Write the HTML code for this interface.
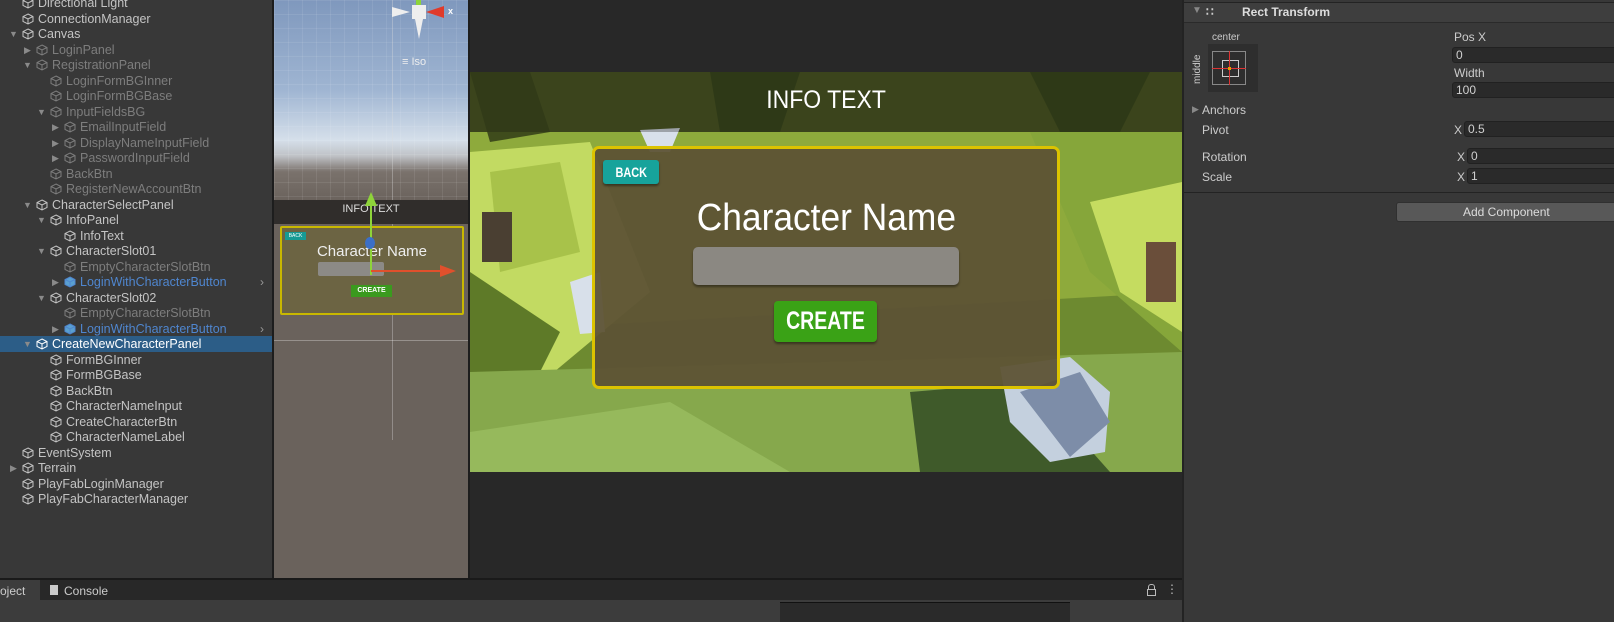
<!DOCTYPE html>
<html><head><meta charset="utf-8"><style>
*{margin:0;padding:0;box-sizing:border-box}
body{width:1614px;height:622px;background:#282828;font-family:"Liberation Sans",sans-serif;overflow:hidden;position:relative;font-size:12px;color:#c4c4c4}
.abs{position:absolute}
#hier{left:0;top:0;width:272px;height:578px;background:#383838}
.row{position:absolute;left:0;width:272px;height:16px;line-height:16px;white-space:nowrap}
.row .ic{position:absolute;top:2px;width:12px;height:12px}
.row .t{position:absolute}
.row .ar{position:absolute;top:0;font-size:9px;color:#8a8a8a}
.sel{background:#2c5d87;color:#fff}
#scene{left:274px;top:0;width:194px;height:578px;background:#6a625c;overflow:hidden}
#game{left:470px;top:72px;width:712px;height:400px;overflow:hidden;background:#7d9c3e}
#insp{left:1182px;top:0;width:432px;height:622px;background:#383838;border-left:2px solid #232323}
.fld{position:absolute;background:#2a2a2a;border:1px solid #212121;border-radius:3px;height:16px;line-height:14px;padding-left:3px;color:#d0d0d0}
.cond{display:inline-block;transform:scaleX(.78)}
</style></head><body>

<div id="hier" class="abs"></div>

<script>
const rows=[
["Directional Light",0,"",""],["ConnectionManager",0,"",""],["Canvas",0,"d",""],
["LoginPanel",1,"r","g"],["RegistrationPanel",1,"d","g"],["LoginFormBGInner",2,"","g"],["LoginFormBGBase",2,"","g"],["InputFieldsBG",2,"d","g"],
["EmailInputField",3,"r","g"],["DisplayNameInputField",3,"r","g"],["PasswordInputField",3,"r","g"],["BackBtn",2,"","g"],["RegisterNewAccountBtn",2,"","g"],
["CharacterSelectPanel",1,"d",""],["InfoPanel",2,"d",""],["InfoText",3,"",""],["CharacterSlot01",2,"d",""],["EmptyCharacterSlotBtn",3,"","g"],
["LoginWithCharacterButton",3,"r","b"],["CharacterSlot02",2,"d",""],["EmptyCharacterSlotBtn",3,"","g"],["LoginWithCharacterButton",3,"r","b"],
["CreateNewCharacterPanel",1,"d","sel"],["FormBGInner",2,"",""],["FormBGBase",2,"",""],["BackBtn",2,"",""],["CharacterNameInput",2,"",""],["CreateCharacterBtn",2,"",""],["CharacterNameLabel",2,"",""],
["EventSystem",0,"",""],["Terrain",0,"r",""],["PlayFabLoginManager",0,"",""],["PlayFabCharacterManager",0,"",""]];
let h="";
rows.forEach((r,i)=>{
 const top=Math.round(-5+i*15.5);
 const tx=38+r[1]*14, ix=tx-16, ax=ix-13;
 const cls=r[3]=="sel"?"row sel":"row";
 const col=r[3]=="g"?"#7d7d7d":r[3]=="b"?"#4f86cf":(r[3]=="sel"?"#fff":"#c4c4c4");
 const fill=r[3]=="b"?"#5aa0d0":"none";
 let a="";
 if(r[2]=="d")a=`<span class="ar" style="left:${ax}px">&#9660;</span>`;
 if(r[2]=="r")a=`<span class="ar" style="left:${ax+1}px">&#9654;</span>`;
 let extra=r[3]=="b"?`<span class="t" style="left:260px;color:#999">&#8250;</span>`:"";
 h+=`<div class="${cls}" style="top:${top}px">${a}<svg class="ic" style="left:${ix}px" viewBox="0 0 12 12"><path d="M6 1L11 3.5V8.5L6 11L1 8.5V3.5Z" fill="${fill}" stroke="${col}"/><path d="M1 3.5L6 6L11 3.5 M6 6V11" fill="none" stroke="${col}"/></svg><span class="t" style="left:${tx}px;color:${col};font-size:12.5px">${r[0]}</span>${extra}</div>`;
});
document.getElementById("hier").innerHTML=h;
</script>

<div class="abs" style="left:272px;top:0;width:2px;height:578px;background:#1d1d1d"></div>

<div id="scene" class="abs">
 <div class="abs" style="left:0;top:0;width:194px;height:200px;background:linear-gradient(#7f98bd 0%,#9fb5d2 45%,#d5dfea 70%,#bfc2c6 78%,#7a726c 86%,#6b635d 100%)"></div>
 <div class="abs" style="left:0;top:0;width:194px;height:200px;background-image:linear-gradient(rgba(255,255,255,.08) 1px,transparent 1px),linear-gradient(90deg,rgba(255,255,255,.08) 1px,transparent 1px);background-size:14px 14px"></div>
 <div class="abs" style="left:118px;top:0;width:1px;height:440px;background:rgba(220,220,220,.35)"></div>
 <div class="abs" style="left:0;top:200px;width:194px;height:24px;background:#302d2b"></div>
 <div class="abs" style="left:0;top:203px;width:194px;text-align:center;color:#ddd;font-size:11px">INFO TEXT</div>
 <div class="abs" style="left:6px;top:226px;width:184px;height:89px;border:2px solid #c9b800;background:#6c6443;border-radius:2px"></div>
 <div class="abs" style="left:11px;top:232px;width:21px;height:8px;background:#169a94;font-size:5px;color:#fff;text-align:center;line-height:8px">BACK</div>
 <div class="abs" style="left:6px;top:243px;width:184px;text-align:center;color:#eee;font-size:15px">Character Name</div>
 <div class="abs" style="left:44px;top:262px;width:66px;height:14px;background:#8c8a86;border-radius:2px"></div>
 <div class="abs" style="left:77px;top:285px;width:41px;height:12px;background:#3a9a1e;color:#fff;font-size:7px;font-weight:bold;text-align:center;line-height:12px">CREATE</div>
 <div class="abs" style="left:96px;top:200px;width:2px;height:75px;background:#8ed43a"></div>
 <div class="abs" style="left:91px;top:192px;width:0;height:0;border-left:6px solid transparent;border-right:6px solid transparent;border-bottom:14px solid #8ed43a"></div>
 <div class="abs" style="left:97px;top:270px;width:70px;height:2px;background:#e0502c"></div>
 <div class="abs" style="left:166px;top:265px;width:0;height:0;border-top:6px solid transparent;border-bottom:6px solid transparent;border-left:16px solid #e0502c"></div>
 <div class="abs" style="left:91px;top:237px;width:10px;height:12px;background:#3b6fc8;border-radius:50%"></div>
 <div class="abs" style="left:138px;top:5px;width:14px;height:14px;background:#eee"></div>
 <div class="abs" style="left:118px;top:7px;width:0;height:0;border-top:5px solid transparent;border-bottom:5px solid transparent;border-left:18px solid #eee"></div>
 <div class="abs" style="left:152px;top:6px;width:0;height:0;border-top:6px solid transparent;border-bottom:6px solid transparent;border-right:18px solid #e03a2a"></div>
 <div class="abs" style="left:141px;top:19px;width:0;height:0;border-left:4px solid transparent;border-right:4px solid transparent;border-top:20px solid #eee"></div>
 <div class="abs" style="left:142px;top:0;width:5px;height:5px;background:#8ed43a"></div>
 <div class="abs" style="left:174px;top:6px;color:#fff;font-size:9px;font-weight:bold">x</div>
 <div class="abs" style="left:128px;top:56px;color:#eee;font-size:11px">&#8801; Iso</div>
 <div class="abs" style="left:0;top:340px;width:194px;height:1px;background:rgba(255,255,255,.3)"></div>
</div>
<div class="abs" style="left:468px;top:0;width:2px;height:578px;background:#1d1d1d"></div>

<div id="game" class="abs">
 <svg class="abs" style="left:0;top:0" width="712" height="400" viewBox="0 0 712 400">
  <rect width="712" height="400" fill="#6d8a30"/>
  <rect y="0" width="712" height="60" fill="#4d5a22"/>
  <polygon points="0,60 712,60 712,220 0,260" fill="#8eaa3c"/>
  <polygon points="0,80 120,70 180,220 60,320 0,330" fill="#c2da62"/>
  <polygon points="20,100 90,90 110,180 30,200" fill="#a8c24a"/>
  <polygon points="0,200 90,260 40,360 0,370" fill="#5e7a28"/>
  <polygon points="560,60 712,60 712,280 620,200" fill="#86a63a"/>
  <polygon points="620,130 712,110 712,260 650,220" fill="#c5dc60"/>
  <polygon points="0,300 712,280 712,400 0,400" fill="#86a84c"/>
  <polygon points="0,360 200,330 320,400 0,400" fill="#96b95c"/>
  <polygon points="440,320 560,310 640,400 450,400" fill="#3f5a2a"/>
  <polygon points="530,295 600,285 640,320 635,380 580,390 540,350" fill="#c4d0de"/>
  <polygon points="550,320 610,300 640,350 600,385" fill="#7d8da8"/>
  <polygon points="100,210 130,200 135,260 110,262" fill="#d8e0ea"/>
  <polygon points="170,58 210,56 200,80 180,80" fill="#d8e0ea"/>
  <polygon points="0,0 60,0 80,60 20,70" fill="#3f4c1c"/>
  <polygon points="240,0 330,0 310,60 250,60" fill="#3a4a1a"/>
  <polygon points="560,0 680,0 650,60 590,60" fill="#3a4a1a"/>
  <rect x="12" y="140" width="30" height="50" fill="#4a3f32"/>
  <rect x="676" y="170" width="30" height="60" fill="#6a4e3a"/>
  <rect x="0" y="0" width="712" height="60" fill="rgba(20,20,15,.3)"/>
 </svg>
 <div class="abs" style="left:0;top:14px;width:712px;text-align:center;color:#fff;font-size:25px"><span class="cond" style="transform:scaleX(.92)">INFO TEXT</span></div>
 <div class="abs" style="left:122px;top:74px;width:468px;height:243px;border:3px solid #dcc300;border-radius:7px;background:rgba(92,82,52,.94)"></div>
 <div class="abs" style="left:133px;top:88px;width:56px;height:24px;background:#17a39b;border-radius:3px;color:#fff;font-weight:bold;font-size:14px;text-align:center;line-height:24px;box-shadow:0 2px 2px rgba(0,0,0,.4)"><span class="cond">BACK</span></div>
 <div class="abs" style="left:122px;top:125px;width:468px;text-align:center;color:#fff;font-size:38px"><span class="cond" style="transform:scaleX(.93)">Character Name</span></div>
 <div class="abs" style="left:223px;top:175px;width:266px;height:38px;background:#8b8882;border-radius:5px;box-shadow:0 2px 2px rgba(0,0,0,.4)"></div>
 <div class="abs" style="left:304px;top:229px;width:103px;height:41px;background:#3aa216;border-radius:4px;color:#fff;font-weight:bold;font-size:25px;text-align:center;line-height:41px;box-shadow:0 2px 2px rgba(0,0,0,.4)"><span class="cond">CREATE</span></div>
</div>

<div class="abs" style="left:0;top:578px;width:1182px;height:2px;background:#1a1a1a"></div>
<div class="abs" style="left:0;top:580px;width:1182px;height:20px;background:#282828"></div>
<div class="abs" style="left:0;top:580px;width:40px;height:20px;background:#3c3c3c;line-height:22px;color:#ccc">oject</div>
<div class="abs" style="left:50px;top:585px;width:8px;height:10px;background:#ccc"></div>
<div class="abs" style="left:64px;top:580px;line-height:22px;color:#ccc">Console</div>
<div class="abs" style="left:1148px;top:584px;width:7px;height:6px;border:1px solid #bbb;border-bottom:none;border-radius:3px 3px 0 0"></div>
<div class="abs" style="left:1147px;top:589px;width:9px;height:7px;border:1px solid #bbb"></div>
<div class="abs" style="left:1166px;top:582px;color:#bbb;font-size:12px">&#8942;</div>
<div class="abs" style="left:0;top:600px;width:1182px;height:22px;background:#3c3c3c"></div>
<div class="abs" style="left:780px;top:602px;width:290px;height:20px;background:#2a2a2a;border-top:1px solid #111"></div>

<div id="insp" class="abs">
 <div class="abs" style="left:0;top:2px;width:432px;height:21px;background:#3e3e3e;border-top:1px solid #232323;border-bottom:1px solid #2a2a2a"></div>
 <div class="abs" style="left:8px;top:5px;color:#888;font-size:10px">&#9660;</div>
 <div class="abs" style="left:22px;top:5px;color:#ccc;font-size:12px;font-weight:bold">&#8759;</div>
 <div class="abs" style="left:58px;top:5px;color:#ddd;font-weight:bold">Rect Transform</div>
 <div class="abs" style="left:28px;top:32px;color:#ccc;font-size:10px">center</div>
 <div class="abs" style="left:8px;top:84px;color:#ccc;font-size:10px;transform:rotate(-90deg);transform-origin:0 0">middle</div>
 <div class="abs" style="left:24px;top:44px;width:50px;height:48px;background:#2e2e2e"></div>
 <div class="abs" style="left:28px;top:51px;width:34px;height:34px;border:1px solid #888"></div>
 <div class="abs" style="left:38px;top:60px;width:17px;height:17px;border:1px solid #ccc"></div>
 <div class="abs" style="left:28px;top:68px;width:34px;height:1px;background:#d33"></div>
 <div class="abs" style="left:45px;top:51px;width:1px;height:34px;background:#d33"></div>
 <div class="abs" style="left:44px;top:67px;width:3px;height:3px;background:#e5a000"></div>
 <div class="abs" style="left:270px;top:30px;color:#ccc">Pos X</div>
 <div class="fld" style="left:268px;top:47px;width:170px">0</div>
 <div class="abs" style="left:270px;top:66px;color:#ccc">Width</div>
 <div class="fld" style="left:268px;top:82px;width:170px">100</div>
 <div class="abs" style="left:8px;top:104px;color:#888;font-size:9px">&#9654;</div>
 <div class="abs" style="left:18px;top:103px;color:#ccc">Anchors</div>
 <div class="abs" style="left:18px;top:123px;color:#ccc">Pivot</div>
 <div class="abs" style="left:270px;top:123px;color:#ccc">X</div>
 <div class="fld" style="left:280px;top:121px;width:160px">0.5</div>
 <div class="abs" style="left:18px;top:150px;color:#ccc">Rotation</div>
 <div class="abs" style="left:273px;top:150px;color:#ccc">X</div>
 <div class="fld" style="left:283px;top:148px;width:160px">0</div>
 <div class="abs" style="left:18px;top:170px;color:#ccc">Scale</div>
 <div class="abs" style="left:273px;top:170px;color:#ccc">X</div>
 <div class="fld" style="left:283px;top:168px;width:160px">1</div>
 <div class="abs" style="left:0;top:192px;width:432px;height:1px;background:#232323"></div>
 <div class="abs" style="left:212px;top:202px;width:230px;height:20px;background:#585858;border-radius:3px;border:1px solid #303030;color:#ddd;line-height:18px;padding-left:66px">Add Component</div>
</div>
</body></html>
